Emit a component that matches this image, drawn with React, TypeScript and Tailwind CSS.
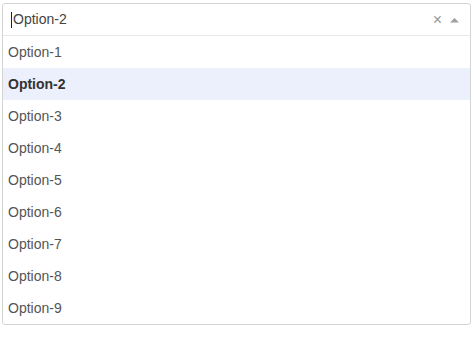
import React from "react";

const options = ["Option-1","Option-2","Option-3","Option-4","Option-5","Option-6","Option-7","Option-8","Option-9"];

export default function App() {
  return (
    <div className="w-[474px] h-[351px] bg-white pt-[3px] pl-[2px]" style={{ fontFamily: '"Liberation Sans", Arial, sans-serif' }}>
      <div className="w-[469px] border border-[#d4d4d4] rounded-[3px] overflow-hidden">
        <div className="h-[32px] flex items-center border-b border-[#e8e8e8] pl-[8px] pr-[11px]">
          <span className="w-px h-[16px] bg-[#222] mr-[1px]"></span>
          <span className="text-[14px] text-[#444] flex-1">Option-2</span>
          <span className="text-[#999] text-[16px] mr-[8px] leading-none">×</span>
          <svg width="9" height="6" viewBox="0 0 9 6"><path d="M0 5.5 L4.5 1 L9 5.5 Z" fill="#a0a0a0" /></svg>
        </div>
        {options.map((o) => (
          <div key={o} className={`h-[32px] flex items-center pl-[5px] text-[14px] ${o === "Option-2" ? "bg-[#ebf0fc] font-bold text-[#333]" : "text-[#555]"}`}>
            {o}
          </div>
        ))}
      </div>
    </div>
  );
}
